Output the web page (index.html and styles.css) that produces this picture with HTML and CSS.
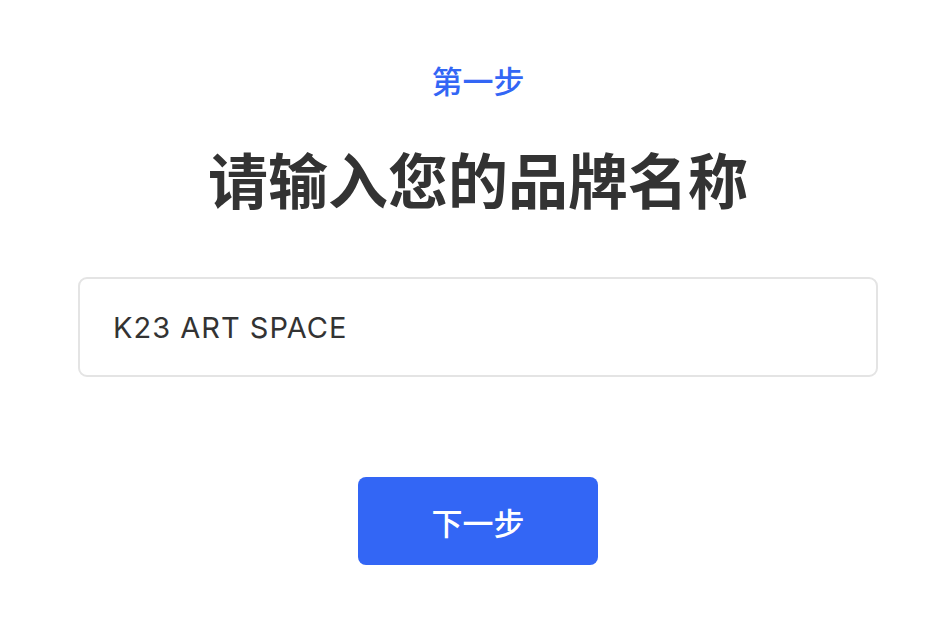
FILE: index.html
```html
<!DOCTYPE html>
<html lang="zh-CN">
<head>
<meta charset="utf-8">
<title>第一步</title>
<link rel="stylesheet" href="styles.css">
</head>
<body>
<main class="page">
  <div class="step">第一步</div>
  <h1 class="title">请输入您的品牌名称</h1>
  <input class="field" type="text" value="K23 ART SPACE">
  <button class="next" type="button">下一步</button>
</main>
</body>
</html>
```

FILE: styles.css
```css
html, body {
  margin: 0;
  padding: 0;
  background: #ffffff;
}

body {
  font-family: Inter, "Noto Sans CJK SC", sans-serif;
  color: #333333;
}

.page {
  width: 800px;
  margin-left: 78px;
  padding-top: 60px;
  display: flex;
  flex-direction: column;
  align-items: center;
}

.step {
  font-family: "Noto Sans CJK SC", sans-serif;
  font-size: 31px;
  line-height: 40px;
  font-weight: 500;
  color: #3366f5;
}

.title {
  margin: 38px 0 0;
  font-family: "Noto Sans CJK SC", sans-serif;
  font-size: 60px;
  line-height: 80px;
  font-weight: 700;
  color: #333333;
}

.field {
  box-sizing: border-box;
  margin-top: 59px;
  width: 800px;
  height: 100px;
  border: 2px solid #e4e4e4;
  border-radius: 9px;
  padding: 0 33px;
  font-family: Inter, "Noto Sans CJK SC", sans-serif;
  font-size: 29px;
  letter-spacing: 1px;
  color: #333333;
  background: #ffffff;
  outline: none;
}

.next {
  margin-top: 100px;
  width: 240px;
  height: 88px;
  border: none;
  border-radius: 8px;
  background: #3366f5;
  color: #ffffff;
  font-family: "Noto Sans CJK SC", sans-serif;
  font-size: 31px;
  font-weight: 500;
  cursor: pointer;
}
```
